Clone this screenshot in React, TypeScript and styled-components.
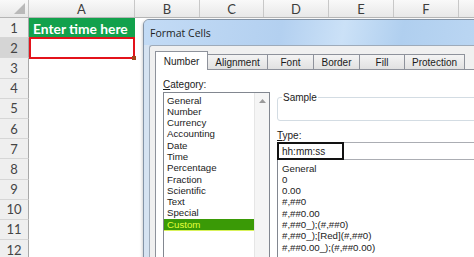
import React from "react";
import styled, { createGlobalStyle, css } from "styled-components";

const GlobalStyle = createGlobalStyle`
  html, body { margin: 0; padding: 0; background: #fff; overflow: hidden; }
`;

const columns = [
  { name: "A", w: 106 },
  { name: "B", w: 65 },
  { name: "C", w: 64 },
  { name: "D", w: 65 },
  { name: "E", w: 65 },
  { name: "F", w: 65 },
  { name: "", w: 40 },
];

const tabs = [
  { name: "Number", w: 53 },
  { name: "Alignment", w: 61 },
  { name: "Font", w: 47 },
  { name: "Border", w: 47 },
  { name: "Fill", w: 46 },
  { name: "Protection", w: 61 },
];

const categories = [
  "General",
  "Number",
  "Currency",
  "Accounting",
  "Date",
  "Time",
  "Percentage",
  "Fraction",
  "Scientific",
  "Text",
  "Special",
  "Custom",
];

const formats = [
  "General",
  "0",
  "0.00",
  "#,##0",
  "#,##0.00",
  "#,##0_);(#,##0)",
  "#,##0_);[Red](#,##0)",
  "#,##0.00_);(#,##0.00)",
];

const Screen = styled.div`
  position: relative;
  width: 474px;
  height: 257px;
  overflow: hidden;
  background: #fff;
  font-family: Lato, "Liberation Sans", sans-serif;
`;

/* ---- sheet ---- */

const HeaderRow = styled.div`
  display: flex;
  height: 18px;
  box-sizing: border-box;
  border-bottom: 1px solid #b5b5b5;
  background: linear-gradient(#f9f9f9, #e8e8e8);
`;

const Corner = styled.div`
  position: relative;
  width: 29px;
  flex-shrink: 0;
  box-sizing: border-box;
  border-right: 1px solid #c4c4c4;

  &::after {
    content: "";
    position: absolute;
    right: 3px;
    bottom: 3px;
    border-style: solid;
    border-width: 0 0 11px 11px;
    border-color: transparent transparent #b9b9b9 transparent;
  }
`;

const ColHeader = styled.div<{ $w: number }>`
  width: ${(p) => p.$w}px;
  flex-shrink: 0;
  box-sizing: border-box;
  border-right: 1px solid #c8c8c8;
  display: flex;
  align-items: center;
  justify-content: center;
  font-size: 13px;
  color: #3d3d3d;
`;

const Row = styled.div`
  display: flex;
  height: 20.2px;
`;

const RowHead = styled.div<{ $selected?: boolean }>`
  width: 29px;
  flex-shrink: 0;
  box-sizing: border-box;
  border-right: 1px solid #a8a8a8;
  border-bottom: 1px solid #d6d6d6;
  background: ${(p) => (p.$selected ? "#d5d5d5" : "#efefef")};
  display: flex;
  align-items: center;
  justify-content: center;
  font-size: 13px;
  color: #444;
`;

const CellA = styled.div<{ $variant?: "green" | "active" }>`
  position: relative;
  width: 106px;
  flex-shrink: 0;
  box-sizing: border-box;
  display: flex;
  align-items: center;
  ${(p) =>
    p.$variant === "green" &&
    css`
      background: #12a14c;
      color: #fff;
      font-weight: 700;
      font-size: 13.8px;
      padding-left: 4px;
    `}
  ${(p) =>
    p.$variant === "active" &&
    css`
      border: 2px solid #e3131b;
      margin-top: -1px;
      height: calc(100% + 2px);
    `}
`;

const FillHandle = styled.span`
  position: absolute;
  right: -3px;
  bottom: -3px;
  width: 4px;
  height: 4px;
  background: #a2451a;
`;

/* ---- dialog ---- */

const Dialog = styled.div`
  position: absolute;
  left: 143px;
  top: 19px;
  width: 345px;
  height: 250px;
  box-sizing: border-box;
  border: 1px solid #8393a6;
  border-radius: 6px 6px 0 0;
  background: #d6e3f1;
  box-shadow: -1px 1px 3px rgba(0, 0, 0, 0.18);
  display: flex;
  flex-direction: column;
  font-family: "Liberation Sans", Arial, sans-serif;
  font-size: 10px;
  color: #1b1b1b;
`;

const TitleBar = styled.div`
  height: 25px;
  flex-shrink: 0;
  padding-left: 6px;
  display: flex;
  align-items: center;
  font-family: "Open Sans", "Noto Sans", sans-serif;
  font-size: 10.5px;
  color: #1e1e1e;
  border-radius: 5px 5px 0 0;
  background: linear-gradient(
    100deg,
    #c3dbf5 0%,
    #b3d0f0 40%,
    #cbe1f7 58%,
    #b0cfef 75%,
    #bcd7f3 100%
  );
`;

const Client = styled.div`
  flex: 1;
  margin-left: 5px;
  border-left: 1px solid #9eabba;
  border-top: 1px solid #9eabba;
  border-radius: 3px 0 0 0;
  background: #f0f0f0;
  padding: 6px 0 0 5px;
  display: flex;
  flex-direction: column;
`;

const TabRow = styled.div`
  display: flex;
  align-items: flex-end;
  height: 18px;
  margin-bottom: -1px;
`;

const Tab = styled.div<{ $w: number; $active?: boolean }>`
  position: relative;
  z-index: ${(p) => (p.$active ? 2 : 0)};
  width: ${(p) => p.$w}px;
  box-sizing: border-box;
  margin-right: -1px;
  border: 1px solid #8e929b;
  display: flex;
  align-items: center;
  justify-content: center;
  ${(p) =>
    p.$active
      ? css`
          height: 19px;
          border-bottom: none;
          background: #fff;
          padding-top: 1px;
        `
      : css`
          height: 16px;
          background: linear-gradient(#f4f4f4, #e1e1e1);
        `}
`;

const TabPanel = styled.div`
  position: relative;
  z-index: 1;
  flex: 1;
  background: #fff;
  border: 1px solid #8e929b;
  padding: 8px 0 0 7px;
  display: flex;
  gap: 7px;
`;

const LeftCol = styled.div`
  width: 107px;
  display: flex;
  flex-direction: column;
`;

const RightCol = styled.div`
  flex: 1;
  display: flex;
  flex-direction: column;
`;

const Label = styled.div`
  height: 13px;
  line-height: 13px;
`;

const ListBox = styled.div`
  flex: 1;
  margin-top: 1px;
  border: 1px solid #828790;
  display: flex;
`;

const Items = styled.div`
  flex: 1;
  padding-top: 1.5px;
`;

const Item = styled.div<{ $selected?: boolean }>`
  height: 11.3px;
  line-height: 11.3px;
  font-size: 9.7px;
  padding-left: 3px;
  white-space: nowrap;
  ${(p) =>
    p.$selected &&
    css`
      background: #3a9a06;
      color: #e4ff3c;
      box-shadow: 0 1px 0 #d9f25a;
    `}
`;

const Scrollbar = styled.div`
  width: 15px;
  box-sizing: border-box;
  border-left: 1px solid #e6e6e6;
  background: #f5f5f5;
  display: flex;
  justify-content: center;
  padding-top: 6px;
`;

const SampleBox = styled.fieldset`
  margin: 13px 0 0 0;
  height: 30px;
  box-sizing: border-box;
  padding: 0 4px;
  border: 1px solid #d3dce3;
  border-radius: 3px;

  legend {
    padding: 0 1px;
    line-height: 13px;
  }
`;

const TypeLabel = styled(Label)`
  margin-top: 8px;
`;

const TypeRow = styled.div`
  display: flex;
  height: 18px;
`;

const Annotation = styled.div`
  width: 67px;
  box-sizing: border-box;
  border: 2px solid #121212;
  padding-left: 3px;
  display: flex;
  align-items: center;
`;

const TypeRest = styled.div`
  flex: 1;
  border: 1px solid #abadb3;
  border-left: none;
`;

const FormatList = styled.div`
  flex: 1;
  border: 1px solid #828790;
  border-top: none;
  padding: 2.5px 0 0 1px;
`;

const UpArrow = () => (
  <svg width="7" height="4" viewBox="0 0 7 4">
    <path d="M0 4 L3.5 0 L7 4 Z" fill="#9a9a9a" />
  </svg>
);

const App: React.FC = () => {
  const rows = Array.from({ length: 12 }, (_, i) => i + 1);
  return (
    <Screen>
      <GlobalStyle />
      <HeaderRow>
        <Corner />
        {columns.map((c, i) => (
          <ColHeader key={i} $w={c.w}>
            {c.name}
          </ColHeader>
        ))}
      </HeaderRow>
      {rows.map((n) => (
        <Row key={n}>
          <RowHead $selected={n === 2}>{n}</RowHead>
          {n === 1 ? (
            <CellA $variant="green">Enter time here</CellA>
          ) : n === 2 ? (
            <CellA $variant="active">
              <FillHandle />
            </CellA>
          ) : (
            <CellA />
          )}
        </Row>
      ))}

      <Dialog>
        <TitleBar>Format Cells</TitleBar>
        <Client>
          <TabRow>
            {tabs.map((t, i) => (
              <Tab key={t.name} $w={t.w} $active={i === 0}>
                {t.name}
              </Tab>
            ))}
          </TabRow>
          <TabPanel>
            <LeftCol>
              <Label>
                <u>C</u>ategory:
              </Label>
              <ListBox>
                <Items>
                  {categories.map((c) => (
                    <Item key={c} $selected={c === "Custom"}>
                      {c}
                    </Item>
                  ))}
                </Items>
                <Scrollbar>
                  <UpArrow />
                </Scrollbar>
              </ListBox>
            </LeftCol>
            <RightCol>
              <SampleBox>
                <legend>Sample</legend>
              </SampleBox>
              <TypeLabel>
                <u>T</u>ype:
              </TypeLabel>
              <TypeRow>
                <Annotation>hh:mm:ss</Annotation>
                <TypeRest />
              </TypeRow>
              <FormatList>
                {formats.map((f) => (
                  <Item key={f}>{f}</Item>
                ))}
              </FormatList>
            </RightCol>
          </TabPanel>
        </Client>
      </Dialog>
    </Screen>
  );
};

export default App;
